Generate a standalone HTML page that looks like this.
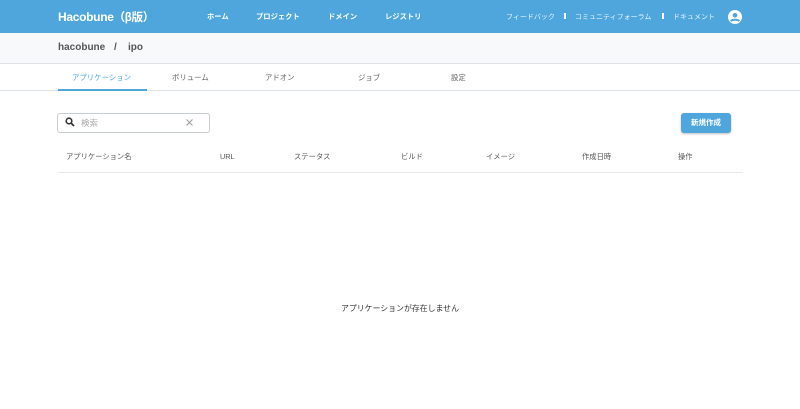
<!DOCTYPE html>
<html><head><meta charset="utf-8"><style>
*{margin:0;padding:0;box-sizing:border-box}
body{width:800px;height:409px;overflow:hidden;background:#fff;font-family:"Liberation Sans","Noto Sans CJK JP",sans-serif;color:#333;position:relative}
.a{position:absolute;white-space:nowrap}
#hdr{position:absolute;left:0;top:0;width:800px;height:33px;background:#4ea6dc}
#bc{position:absolute;left:0;top:33px;width:800px;height:31px;background:#f7f9fb;border-bottom:1px solid #dde2e6}
#tabs{position:absolute;left:0;top:90px;width:800px;height:1px;background:#dde2e6}
.w{color:#fff;font-size:7.3px;font-weight:bold;top:12px}
.l{color:#e8f3fb;font-size:7px;top:12px}
.t{font-size:7.4px;color:#666;top:72px}
.h{font-size:7.3px;color:#555;top:152px}
</style></head><body>
<div id="hdr"></div>
<div class="a" style="left:58px;top:9px;color:#fff;font-size:12px;font-weight:bold;letter-spacing:-0.3px">Hacobune<span style="font-size:11.5px">（β版）</span></div>
<div class="a w" style="left:207px">ホーム</div>
<div class="a w" style="left:256px">プロジェクト</div>
<div class="a w" style="left:328px">ドメイン</div>
<div class="a w" style="left:385px">レジストリ</div>
<div class="a l" style="left:506px">フィードバック</div>
<div class="a" style="left:564px;top:13px;width:1.5px;height:6px;background:#fff"></div>
<div class="a l" style="left:575px">コミュニティフォーラム</div>
<div class="a" style="left:662px;top:13px;width:1.5px;height:6px;background:#fff"></div>
<div class="a l" style="left:673px">ドキュメント</div>
<svg class="a" style="left:728px;top:10px" width="14" height="14" viewBox="0 0 14 14"><circle cx="7" cy="7" r="7" fill="#fff"/><circle cx="7" cy="5.3" r="2.3" fill="#4ea6dc"/><path d="M2.8 11.2C4 9.2 10 9.2 11.2 11.2" stroke="#4ea6dc" stroke-width="2" fill="none"/></svg>
<div id="bc"></div>
<div class="a" style="left:58px;top:42px;font-size:10px;font-weight:bold;color:#555">hacobune</div>
<div class="a" style="left:114px;top:42px;font-size:10px;font-weight:bold;color:#555">/</div>
<div class="a" style="left:128px;top:42px;font-size:10px;font-weight:bold;color:#555">ipo</div>
<div id="tabs"></div>
<div class="a t" style="left:72px;color:#4ea6dc">アプリケーション</div>
<div class="a" style="left:58px;top:89px;width:89px;height:2px;background:#4ea6dc"></div>
<div class="a t" style="left:172px">ボリューム</div>
<div class="a t" style="left:265px">アドオン</div>
<div class="a t" style="left:358px">ジョブ</div>
<div class="a t" style="left:451px">設定</div>
<div class="a" style="left:57px;top:113px;width:153px;height:20px;border:1px solid #c8cdd2;border-radius:3px"></div>
<svg class="a" style="left:65px;top:117px" width="10" height="10" viewBox="0 0 10 10"><circle cx="4" cy="4" r="2.8" stroke="#333" stroke-width="1.6" fill="none"/><path d="M6 6L9 9" stroke="#333" stroke-width="1.8"/></svg>
<div class="a" style="left:81px;top:117px;font-size:8.5px;color:#aaa">検索</div>
<svg class="a" style="left:186px;top:119px" width="7" height="7" viewBox="0 0 7 7"><path d="M0.5 0.5L6.5 6.5M6.5 0.5L0.5 6.5" stroke="#999" stroke-width="1"/></svg>
<div class="a" style="left:681px;top:113px;width:50px;height:20px;background:#4ea6dc;border-radius:3px;box-shadow:0 1px 2px rgba(0,0,0,.25);color:#fff;font-size:7.5px;font-weight:bold;text-align:center;line-height:20px">新規作成</div>
<div class="a h" style="left:66px">アプリケーション名</div>
<div class="a h" style="left:220px">URL</div>
<div class="a h" style="left:294px">ステータス</div>
<div class="a h" style="left:401px">ビルド</div>
<div class="a h" style="left:486px">イメージ</div>
<div class="a h" style="left:582px">作成日時</div>
<div class="a h" style="left:678px">操作</div>
<div class="a" style="left:58px;top:172px;width:685px;height:1px;background:#e6e8ea"></div>
<div class="a" style="left:341px;top:303px;font-size:7.9px;color:#333">アプリケーションが存在しません</div>
</body></html>
